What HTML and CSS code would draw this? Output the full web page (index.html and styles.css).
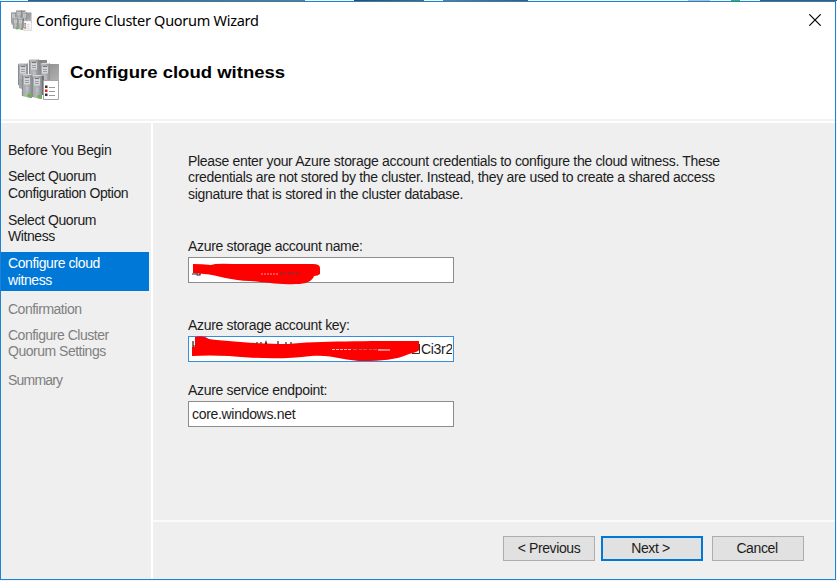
FILE: index.html
```html
<!doctype html>
<html>
<head>
<meta charset="utf-8">
<title>Configure Cluster Quorum Wizard</title>
<link rel="stylesheet" href="styles.css">
</head>

<body>
<svg class="defs" width="0" height="0">
	<defs>
		<linearGradient id="metal" x1="0" y1="0" x2="1" y2="0">
			<stop offset="0" stop-color="#a2a5a7"/>
			<stop offset=".5" stop-color="#b6b9bb"/>
			<stop offset="1" stop-color="#8b8e90"/>
		</linearGradient>
		<linearGradient id="back" x1="0" y1="0" x2="1" y2="1">
			<stop offset="0" stop-color="#777"/>
			<stop offset="1" stop-color="#b8b8b8"/>
		</linearGradient>
		<g id="server">
			<path d="M0 1L3 0H10V24H8L0 22Z" fill="url(#metal)"/>
			<path d="M0 1.500L3 .5H9.500" stroke="#d8dadb" fill="none"/>
			<path d="M.4 1V22" stroke="#7d8082" stroke-width=".8"/>
			<path d="M2 3.500H8V10.500H2Z" fill="#d3d6d8"/>
			<path d="M3 3.500H7" stroke="#777" stroke-width="1.200"/>
			<path d="M3 6.500H7M3 8.500H7" stroke="#8d9193" stroke-width=".8"/>
			<path d="M4 14H7M4 16H7" stroke="#c6c8ca" stroke-width=".8"/>
		</g>
		<symbol id="cluster" viewBox="0 0 42 42">
			<path d="M11 1H29V5H41V26H11Z" fill="url(#back)"/>
			<use href="#server" x="11" y="0"/>
			<use href="#server" x="0" y="4"/>
			<use href="#server" x="22" y="4"/>
			<path d="M1 20H7V31L1 29Z" fill="#a4a7a9"/>
			<path d="M11 17H26V36H11Z" fill="#6f7274"/>
			<use href="#server" x="4" y="15"/>
			<use href="#server" x="14" y="16"/>
			<circle cx="11" cy="36.500" r="1.700" fill="#58c51e"/>
			<circle cx="21" cy="37.500" r="1.700" fill="#58c51e"/>
			<path d="M25.500 21.500H40.500V40.500H25.500Z" fill="#fff" stroke="#a5a5a5"/>
			<path d="M27 26.500h2.500v2.500h-2.500z" fill="#333"/>
			<path d="M27 30.500h2.500v2.500h-2.500z" fill="#f02020"/>
			<path d="M27 34.500h2.500v2.500h-2.500z" fill="#333"/>
			<path d="M31 28.500H37M31 32.500H37M31 36.500H37" stroke="#999"/>
		</symbol>
	</defs>
</svg>
<div class="strip"></div>
<div class="window">
	<div class="titlebar">
		<svg class="app-icon" width="21" height="21"><use href="#cluster"/></svg>
		<span class="title">Configure Cluster Quorum Wizard</span>
		<svg class="close" width="12" height="12" viewBox="0 0 12 12"><path d="M.3.3L11.700 11.700M11.700.3L.3 11.700" stroke="#000" stroke-width="1.200"/></svg>
	</div>
	<header class="header">
		<svg class="head-icon" width="42" height="42"><use href="#cluster"/></svg>
		<h1>Configure cloud witness</h1>
	</header>
	<div class="main">
		<ul class="steps">
			<li class="begin">Before You Begin</li>
			<li class="option">Select Quorum<br>Configuration Option</li>
			<li class="quorum">Select Quorum<br>Witness</li>
			<li class="active">Configure cloud<br>witness</li>
			<li class="todo confirm">Confirmation</li>
			<li class="todo settings">Configure Cluster<br>Quorum Settings</li>
			<li class="todo">Summary</li>
		</ul>
		<div class="content">
			<div class="page">
				<p class="intro">Please enter your Azure storage account credentials to configure the cloud witness. These<br>credentials are not stored by the cluster. Instead, they are used to create a shared access<br>signature that is stored in the cluster database.</p>
				<div class="row row-name">
					<label>Azure storage account name:</label>
					<div class="field">
						<svg class="mark" width="266" height="28" viewBox="0 0 266 28">
							<path d="M4 17h4M9 15v3h3v-2" stroke="#222" stroke-width="1.200" fill="none"/>
							<path d="M5 7Q14 7 23 8Q28 6 45 7H125Q132 7 132 11V17Q130 19 126 19Q123 27 108 27C88 28 78 25 62 24C44 24 30 18 16 17L5 16Z" fill="#f00"/>
							<path d="M73 17h18" stroke="#f99" stroke-dasharray="2 1"/>
							<path d="M92 16.500h20" stroke="#733" stroke-width="1.500" stroke-dasharray="3 1 2 2"/>
						</svg>
					</div>
				</div>
				<div class="row row-key">
					<label>Azure storage account key:</label>
					<div class="field focus">
						<span class="tail">Ci3r2</span>
						<svg class="mark" width="266" height="28" viewBox="0 0 266 28">
							<path d="M5 5v14M5 10h3M69 9v-3M73 9v-3M77 9l1-3 1 3M90 9v-4M98 8v-2M103 8v-2" stroke="#222" stroke-width="1.200" fill="none"/>
							<path d="M224 17.500h7.500V8" stroke="#333" fill="none"/>
							<path d="M7 1Q16 -1 21 3C44 6 78 8 100 8C130 5 180 5 231 5V14Q230 16 221 18C208 24 192 25 177 25C157 25 143 18 123 20C95 24 60 22 41 20Q20 19 4 20V11H7Z" fill="#f00"/>
							<path d="M144 13.500h20" stroke="#fbb" stroke-dasharray="3 1"/>
							<path d="M165 13.500h28" stroke="#a66" stroke-dasharray="4 2 3 1"/>
							<path d="M190 14h12" stroke="#fff"/>
						</svg>
					</div>
				</div>
				<div class="row">
					<label>Azure service endpoint:</label>
					<div class="field"><span class="value">core.windows.net</span></div>
				</div>
			</div>
			<div class="buttons">
				<button class="btn prev">&lt; Previous</button>
				<button class="btn next">Next &gt;</button>
				<button class="btn cancel">Cancel</button>
			</div>
		</div>
	</div>
</div>
</body>
</html>
```
FILE: styles.css
```css
body,h1,p,ul,li{margin:0;padding:0;}
*{ box-sizing:border-box;}
li{ list-style:none;}
svg{ display:block;}
body{ width:837px; height:581px; overflow:hidden; background:#f4f4f4; font:14px/16.3px "Liberation Sans",Arial,sans-serif; color:#1c1c1c; letter-spacing:-.31px;}
.defs{ position:absolute;}

.strip{ height:1px; background:linear-gradient(90deg,transparent 28px,#555 28px,#776 305px,transparent 305px,transparent 354px,#444 354px,#665 424px,transparent 424px,transparent 443px,#777 443px,#555 528px,transparent 528px,transparent 688px,#bbb 688px,#bbb 710px,transparent 710px,transparent 731px,#3b3 731px,#3b3 740px,transparent 740px,transparent 760px,#555 760px);}
.window{ width:836px; height:579px; border:1px solid #1e82d2; background:#fff; display:flex; flex-direction:column;}
.titlebar{ height:40px; display:flex; align-items:flex-start; padding:8px 14px 0 10px;}
.title{ font:14.5px/20px "Noto Sans","Open Sans",sans-serif; color:#000; margin-left:4px; letter-spacing:-.28px;}
.close{ margin:4px 0 0 auto;}
.header{ height:79px; padding:17px 0 0 17px; display:flex; border-bottom:2px solid #f3f3f3;}
.header h1{ font-size:16.500px; line-height:20px; margin:3px 0 0 10px; color:#000; letter-spacing:0; transform:scaleX(1.123); transform-origin:0 0;}
.main{ flex:1; display:flex; margin-top:2px;}

.steps{ width:150px; background:#efefef; padding-top:19px;}
.steps li{ padding-left:7px; white-space:nowrap; letter-spacing:-.41px;}
.steps .begin{ margin-bottom:10px; letter-spacing:-.3px;}
.option{ margin-bottom:11px;}
.quorum{ margin-bottom:8px;}
.steps .active{ width:148px; height:39px; padding-top:3px; background:#0078d7; color:#fff; margin-bottom:10px;}
.steps .todo{ color:#808080; letter-spacing:-.49px;}
.steps .confirm{ margin-bottom:9px;}
.steps .settings{ margin-bottom:13px;}
.steps .todo:last-child{ letter-spacing:-.8px;}

.content{ flex:1; margin-left:2px; background:#efefef; display:flex; flex-direction:column;}
.page{ height:397px; padding:30px 0 0 35px;}
.intro{ white-space:nowrap; height:85px;}
.row{ width:266px;}
.row label{ display:block; line-height:16px; height:19px; white-space:nowrap;}
.row-name{ height:79px;}
.row-key{ height:65px;}
.field{ position:relative; height:26px; border:1px solid #8c8c8c; background:#fff; line-height:24px;}
.focus{ border-color:#3390df;}
.value{ padding-left:3px;}
.tail{ display:block; width:31px; margin-left:232px; overflow:hidden; white-space:nowrap;}
.mark{ position:absolute; left:-1px; top:-1px; overflow:visible;}

.buttons{ flex:1; border-top:2px solid #fafafa; display:flex; padding:14px 0 0 350px;}
.btn{ height:25px; border:1px solid #adadad; background:#e1e1e1; padding:0; font:inherit; letter-spacing:-.4px; color:#1c1c1c;}
.prev{ width:92px;}
.next{ width:102px; border:2px solid #0078d7; margin:0 9px 0 6px; padding-right:3px;}
.cancel{ width:92px; padding-right:2px;}
```
